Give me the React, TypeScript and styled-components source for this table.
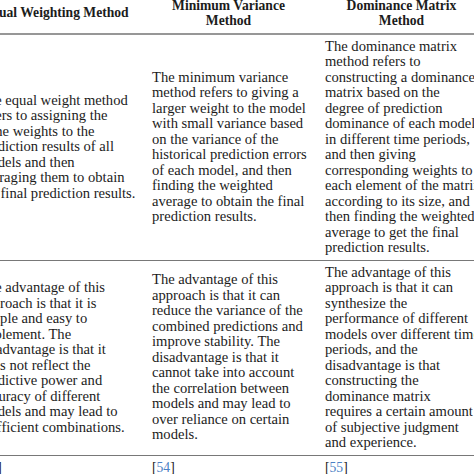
import React from 'react';
import styled, { createGlobalStyle } from 'styled-components';

const COL_WIDTH = 173;
const TEXT_WIDTH = 153;

const GlobalStyle = createGlobalStyle`
  html, body {
    margin: 0;
    padding: 0;
    background: #fff;
  }
  body {
    font-family: 'Liberation Serif', 'Times New Roman', serif;
    color: #1c1c1c;
  }
`;

const columns = [
  {
    title: ['Equal Weighting Method'],
    method: [
      'The equal weight method',
      'refers to assigning the',
      'same weights to the',
      'prediction results of all',
      'models and then',
      'averaging them to obtain',
      'the final prediction results.',
    ],
    pros: [
      'The advantage of this',
      'approach is that it is',
      'simple and easy to',
      'implement. The',
      'disadvantage is that it',
      'does not reflect the',
      'predictive power and',
      'accuracy of different',
      'models and may lead to',
      'inefficient combinations.',
    ],
    ref: '53',
  },
  {
    title: ['Minimum Variance', 'Method'],
    method: [
      'The minimum variance',
      'method refers to giving a',
      'larger weight to the model',
      'with small variance based',
      'on the variance of the',
      'historical prediction errors',
      'of each model, and then',
      'finding the weighted',
      'average to obtain the final',
      'prediction results.',
    ],
    pros: [
      'The advantage of this',
      'approach is that it can',
      'reduce the variance of the',
      'combined predictions and',
      'improve stability. The',
      'disadvantage is that it',
      'cannot take into account',
      'the correlation between',
      'models and may lead to',
      'over reliance on certain',
      'models.',
    ],
    ref: '54',
  },
  {
    title: ['Dominance Matrix', 'Method'],
    method: [
      'The dominance matrix',
      'method refers to',
      'constructing a dominance',
      'matrix based on the',
      'degree of prediction',
      'dominance of each model',
      'in different time periods,',
      'and then giving',
      'corresponding weights to',
      'each element of the matrix',
      'according to its size, and',
      'then finding the weighted',
      'average to get the final',
      'prediction results.',
    ],
    pros: [
      'The advantage of this',
      'approach is that it can',
      'synthesize the',
      'performance of different',
      'models over different time',
      'periods, and the',
      'disadvantage is that',
      'constructing the',
      'dominance matrix',
      'requires a certain amount',
      'of subjective judgment',
      'and experience.',
    ],
    ref: '55',
  },
];

const Viewport = styled.div`
  width: 474px;
  height: 474px;
  overflow: hidden;
`;

const Table = styled.div`
  margin: -6.5px 0 0 -21px;
  width: ${COL_WIDTH * 3}px;
`;

const Row = styled.div<{ $rule: string }>`
  display: grid;
  grid-template-columns: repeat(3, ${COL_WIDTH}px);
  border-bottom: ${(p) => p.$rule};
`;

const Cell = styled.div<{ $head?: boolean }>`
  box-sizing: border-box;
  width: ${COL_WIDTH}px;
  padding: 4px ${COL_WIDTH - TEXT_WIDTH}px 4px 0;
  align-self: center;
  font-size: ${(p) => (p.$head ? '13.6px' : '14.6px')};
  font-weight: ${(p) => (p.$head ? 700 : 400)};
  line-height: 15.5px;
  text-align: ${(p) => (p.$head ? 'center' : 'left')};
`;

const Line = styled.span`
  display: block;
  white-space: nowrap;
`;

const Ref = styled.span`
  font-size: 13.6px;
  white-space: nowrap;
`;

const RefNumber = styled.span`
  color: #4a80c4;
`;

const Lines = ({ lines }: { lines: string[] }) => (
  <>
    {lines.map((l, i) => (
      <Line key={i}>{l}</Line>
    ))}
  </>
);

export default function App() {
  return (
    <Viewport>
      <GlobalStyle />
      <Table>
        <Row $rule="2px solid #979797">
          {columns.map((c) => (
            <Cell key={c.ref} $head>
              <Lines lines={c.title} />
            </Cell>
          ))}
        </Row>
        <Row $rule="1px solid #787878">
          {columns.map((c) => (
            <Cell key={c.ref}>
              <Lines lines={c.method} />
            </Cell>
          ))}
        </Row>
        <Row $rule="1px solid #787878">
          {columns.map((c) => (
            <Cell key={c.ref}>
              <Lines lines={c.pros} />
            </Cell>
          ))}
        </Row>
        <Row $rule="none">
          {columns.map((c) => (
            <Cell key={c.ref}>
              <Ref>
                [<RefNumber>{c.ref}</RefNumber>]
              </Ref>
            </Cell>
          ))}
        </Row>
      </Table>
    </Viewport>
  );
}
